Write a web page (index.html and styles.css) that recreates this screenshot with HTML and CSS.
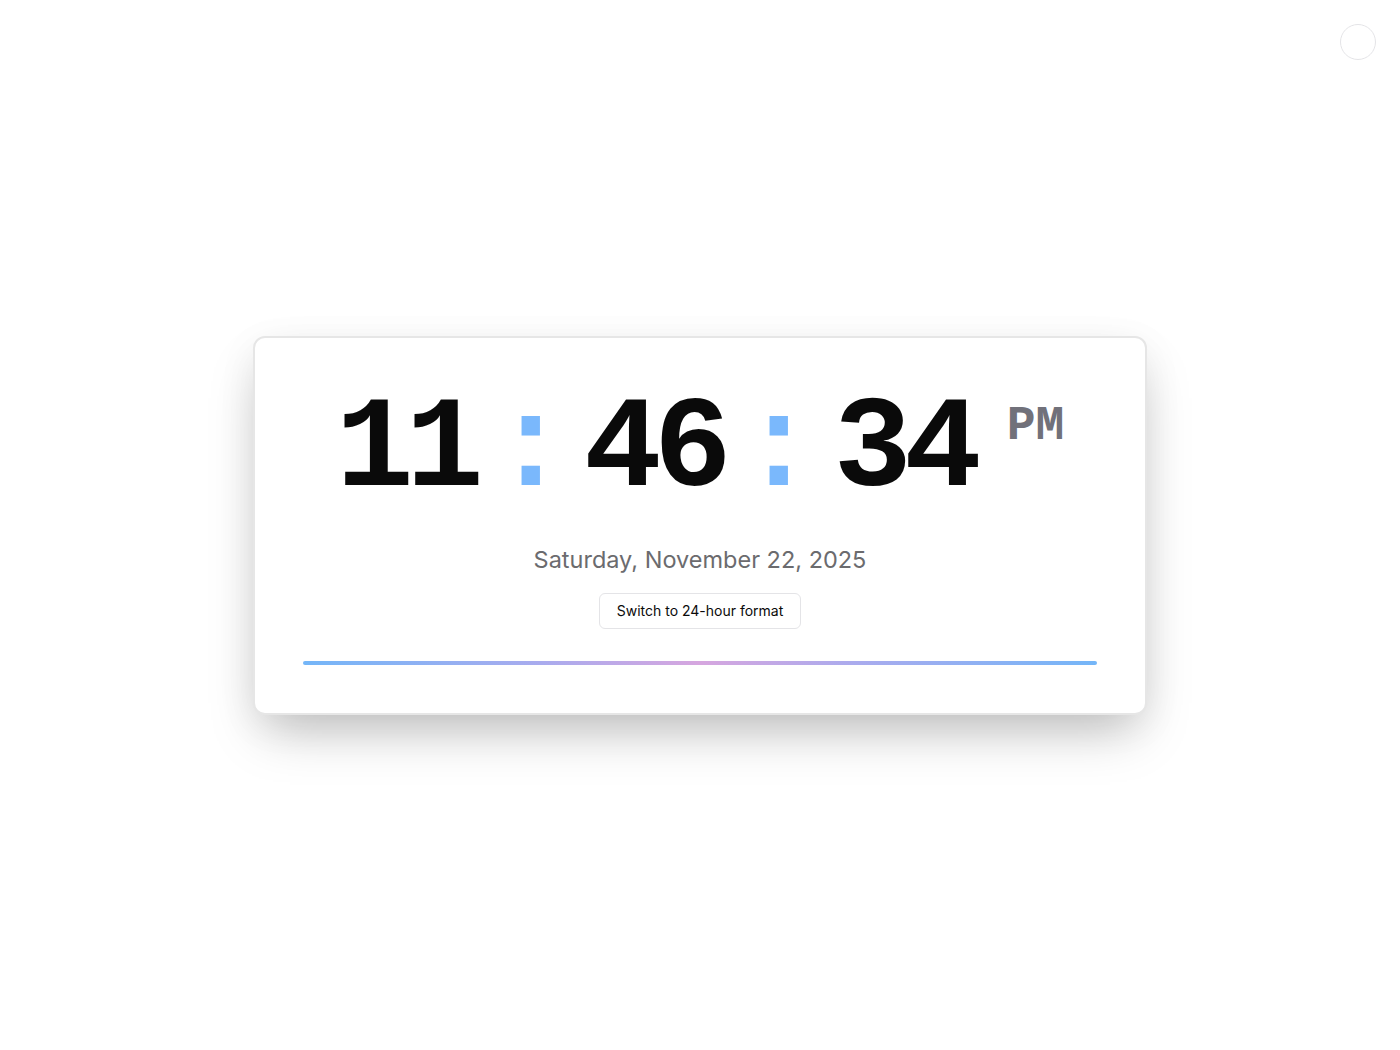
FILE: index.html
```html
<!DOCTYPE html>
<html lang="en">
<head>
<meta charset="utf-8">
<title>Clock</title>
<link rel="stylesheet" href="styles.css">
</head>
<body>
<button class="theme-toggle" aria-label="Toggle theme"></button>
<main class="stage">
  <section class="card">
    <div class="clock">
      <span class="seg">11</span>
      <span class="colon">:</span>
      <span class="seg">46</span>
      <span class="colon colon-last">:</span>
      <span class="seg">34</span>
      <span class="ampm">PM</span>
    </div>
    <div class="date">Saturday, November 22, 2025</div>
    <button class="fmt-btn">Switch to 24-hour format</button>
    <div class="bar"></div>
  </section>
</main>
</body>
</html>
```
FILE: styles.css
```css
* { box-sizing: border-box; }
html, body { margin: 0; height: 100%; background: #ffffff; }
body { font-family: Inter, "Noto Sans", sans-serif; }

.theme-toggle {
  position: fixed;
  top: 24px;
  right: 24px;
  width: 36px;
  height: 36px;
  border-radius: 50%;
  border: 1px solid #e4e4e7;
  background: #ffffff;
  padding: 0;
}

.stage {
  height: 100%;
  display: flex;
  align-items: center;
  justify-content: center;
}

.card {
  width: 894px;
  padding: 48px;
  background: #ffffff;
  border: 2px solid #e6e6e6;
  border-radius: 12px;
  box-shadow: 0 25px 50px -12px rgba(0, 0, 0, 0.25), 0 10px 40px rgba(0, 0, 0, 0.06);
  display: flex;
  flex-direction: column;
  align-items: center;
}

.clock {
  display: flex;
  align-items: flex-start;
  justify-content: center;
  font-family: "Liberation Mono", monospace;
  font-weight: 700;
  line-height: 1;
  color: #0a0a0a;
}
.seg {
  font-size: 130px;
  letter-spacing: -8px;
}
.colon {
  font-size: 130px;
  letter-spacing: -8px;
  color: #7ab8fc;
  margin: 0 22px 0 16px;
}
.colon-last { margin-right: 24px; }
.ampm {
  font-size: 48px;
  color: #71717a;
  margin-left: 33px;
  margin-top: 16px;
}

.date {
  margin-top: 28px;
  font-size: 23.5px;
  line-height: 32px;
  color: #6b6b6e;
}

.fmt-btn {
  margin-top: 17px;
  height: 36px;
  padding: 0 17px;
  font-family: Inter, "Noto Sans", sans-serif;
  font-size: 14px;
  color: #0a0a0a;
  background: #ffffff;
  border: 1px solid #e4e4e7;
  border-radius: 6px;
}

.bar {
  margin-top: 32px;
  align-self: stretch;
  height: 4px;
  border-radius: 2px;
  background: linear-gradient(90deg, #74b6f8 0%, #a9abee 30%, #d6a6df 50%, #a9abee 70%, #74b6f8 100%);
}
```
